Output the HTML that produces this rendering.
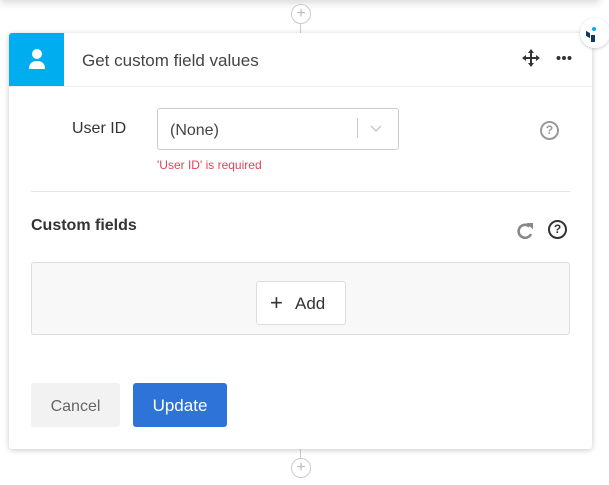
<!DOCTYPE html><html><head><style>
body{margin:0;width:609px;height:485px;background:#fff;font-family:"Liberation Sans",sans-serif;position:relative;overflow:hidden}
.abs{position:absolute}
.card{left:9px;top:33px;width:583px;height:416px;background:#fff;box-shadow:0 1px 6px rgba(0,0,0,.22);border-radius:3px}
.q{width:15px;height:15px;border-radius:50%;font-size:12px;line-height:15px;text-align:center;font-weight:bold}
</style></head><body>
<div class="abs" style="left:0;top:-20px;width:600px;height:20px;box-shadow:0 3px 8px rgba(0,0,0,.15);background:#fff"></div>
<div class="abs" style="left:300px;top:22px;width:1px;height:12px;background:#ccc"></div>
<div class="abs" style="left:291px;top:4px;width:18px;height:18px;border:1px solid #ccc;border-radius:50%;background:#fff;color:#bbb;font-size:16px;line-height:18px;text-align:center">+</div>
<div class="abs" style="left:300px;top:449px;width:1px;height:10px;background:#ccc"></div>
<div class="abs" style="left:291px;top:458px;width:18px;height:18px;border:1px solid #ccc;border-radius:50%;background:#fff;color:#bbb;font-size:16px;line-height:18px;text-align:center">+</div>
<div class="abs card">
 <div class="abs" style="left:0;top:0;width:55px;height:53px;background:#00aeef;border-radius:3px 0 0 0"></div>
 <svg class="abs" style="left:18px;top:15px" width="20" height="22" viewBox="0 0 20 22"><circle cx="10" cy="6" r="5" fill="#fff"/><path d="M2 21 Q2 13 10 13 Q18 13 18 21Z" fill="#fff"/></svg>
 <div class="abs" style="left:73px;top:18px;font-size:17px;color:#444">Get custom field values</div>
 <div class="abs" style="left:0;top:53px;width:583px;height:1px;background:#eee"></div>
 <svg class="abs" style="left:513px;top:16px" width="18" height="18" viewBox="0 0 18 18" fill="#333"><path d="M9 0L12 4H10V8H14V6L18 9L14 12V10H10V14H12L9 18L6 14H8V10H4V12L0 9L4 6V8H8V4H6Z"/></svg>
 <svg class="abs" style="left:547px;top:22px" width="16" height="6"><circle cx="2.5" cy="3" r="2" fill="#333"/><circle cx="8" cy="3" r="2" fill="#333"/><circle cx="13.5" cy="3" r="2" fill="#333"/></svg>
 <div class="abs" style="left:63px;top:87px;font-size:16px;color:#333">User ID</div>
 <div class="abs" style="left:148px;top:75px;width:240px;height:40px;border:1px solid #ccc;border-radius:3px"></div>
 <div class="abs" style="left:161px;top:89px;font-size:16px;color:#444">(None)</div>
 <div class="abs" style="left:348px;top:85px;width:1px;height:20px;background:#ccc"></div>
 <svg class="abs" style="left:361px;top:92px" width="12" height="8" viewBox="0 0 12 8"><path d="M1 1L6 6L11 1" stroke="#ccc" stroke-width="1.6" fill="none"/></svg>
 <div class="abs" style="left:148px;top:125px;font-size:12px;color:#e2435a">'User ID' is required</div>
 <div class="abs q" style="left:531px;top:88px;border:2px solid #999;color:#999">?</div>
 <div class="abs" style="left:22px;top:158px;width:539px;height:1px;background:#e5e5e5"></div>
 <div class="abs" style="left:22px;top:184px;font-size:16px;font-weight:bold;color:#333">Custom fields</div>
 <svg class="abs" style="left:507px;top:189px" width="18" height="18" viewBox="0 0 18 18"><path d="M13.5 4.5A6.5 6.5 0 1 0 15 12" stroke="#888" stroke-width="2.6" fill="none"/><path d="M10.5 1L17 1L17 7.5Z" fill="#888"/></svg>
 <div class="abs q" style="left:539px;top:187px;border:2px solid #333;color:#333">?</div>
 <div class="abs" style="left:22px;top:229px;width:537px;height:71px;background:#f8f8f8;border:1px solid #ddd;border-radius:3px"></div>
 <div class="abs" style="left:247px;top:248px;width:88px;height:42px;background:#fff;border:1px solid #ddd;border-radius:3px"></div>
 <div class="abs" style="left:261px;top:257px;font-size:22px;color:#333">+</div>
 <div class="abs" style="left:286px;top:261px;font-size:17px;color:#333">Add</div>
 <div class="abs" style="left:22px;top:350px;width:89px;height:44px;background:#f2f2f2;border-radius:3px;font-size:16px;color:#666;line-height:48px;text-align:center">Cancel</div>
 <div class="abs" style="left:124px;top:350px;width:94px;height:44px;background:#2e73d8;border-radius:3px;font-size:17px;color:#fff;line-height:46px;text-align:center">Update</div>
</div>
<div class="abs" style="left:580px;top:18px;width:30px;height:30px;border-radius:50%;background:#fff;box-shadow:0 1px 3px rgba(0,0,0,.2)"></div>
<div class="abs" style="left:586px;top:32px;width:4px;height:5px;background:#123a5e;transform:skewY(30deg)"></div>
<div class="abs" style="left:591px;top:35px;width:4px;height:7px;background:#123a5e"></div>
<div class="abs" style="left:592px;top:27px;width:4px;height:4px;border-radius:50%;background:#00aeef"></div>
</body></html>
